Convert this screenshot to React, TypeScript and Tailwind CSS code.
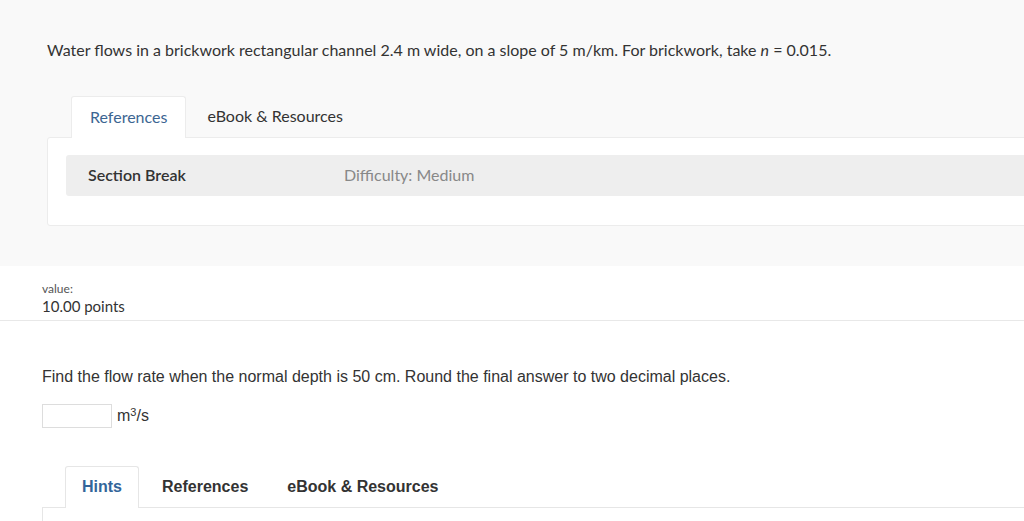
import React from "react";

const proxima = { fontFamily: "Lato, 'Open Sans', sans-serif" };

function TopTabs() {
  return (
    <div className="flex items-end pl-[24px] gap-[4px]">
      <div className="h-[42px] px-[18px] pb-[2px] flex items-center bg-white border border-b-0 border-[#ececec] rounded-t-[3px] text-[16px] text-[#3c6592] relative top-[1px]">
        References
      </div>
      <div className="h-[42px] pl-[17px] pr-[18px] flex items-center text-[16px] text-[#333]">
        eBook &amp; Resources
      </div>
    </div>
  );
}

function BottomTabs() {
  return (
    <div className="flex items-end pl-[23px]">
      <div className="h-[42px] px-[16px] pb-[1px] flex items-center bg-white border border-b-0 border-[#e6e6e6] rounded-t-[3px] text-[16px] font-bold text-[#33659a] relative top-[1px]">
        Hints
      </div>
      <div className="ml-[4px] h-[42px] px-[19px] pt-[2px] flex items-center text-[16px] font-bold text-[#333]">
        References
      </div>
      <div className="ml-[1px] h-[42px] px-[19px] pt-[2px] flex items-center text-[16px] font-bold text-[#333]">
        eBook &amp; Resources
      </div>
    </div>
  );
}

export default function App() {
  return (
    <div className="w-full overflow-hidden bg-white min-h-[521px]">
      <div className="bg-[#f9f9f9] h-[266px] pt-[40px] pl-[47px]" style={proxima}>
        <p className="text-[16px] leading-[20px] text-[#333]">
          Water flows in a brickwork rectangular channel 2.4 m wide, on a slope of 5 m/km. For brickwork, take{" "}
          <i>n</i> = 0.015.
        </p>
        <div className="mt-[35px]">
          <TopTabs />
          <div className="mr-[-40px] bg-white border border-[#ececec] rounded-[3px] pt-[17px] pb-[29px] pl-[18px]">
            <div className="h-[41px] pb-[2px] bg-[#eeeeee] rounded-l-[3px] flex items-center pl-[22px] text-[16px]">
              <span className="w-[256px] font-semibold text-[#333]">Section Break</span>
              <span className="text-[#888]">Difficulty: Medium</span>
            </div>
          </div>
        </div>
      </div>

      <div className="pl-[42px] pt-[16px] pb-[4px] border-b border-[#e8e8e8]" style={proxima}>
        <div className="text-[12px] leading-[14px] text-[#555]">value:</div>
        <div className="text-[15px] leading-[20px] text-[#333]">10.00 points</div>
      </div>

      <div className="pl-[42px]" style={{ fontFamily: "'Liberation Sans', Arial, sans-serif" }}>
        <p className="mt-[46px] text-[16px] leading-[20px] text-[#333]">
          Find the flow rate when the normal depth is 50 cm. Round the final answer to two decimal places.
        </p>
        <div className="mt-[17px] flex items-center gap-[5px]">
          <input
            type="text"
            className="w-[70px] h-[24px] border border-[#dddddd] bg-white outline-none"
          />
          <span className="text-[16px] text-[#333]">
            m<sup className="text-[11px]">3</sup>/s
          </span>
        </div>
        <div className="mt-[37px]">
          <BottomTabs />
          <div className="mr-[-40px] h-[30px] bg-white border-t border-l border-[#e6e6e6]" />
        </div>
      </div>
    </div>
  );
}
